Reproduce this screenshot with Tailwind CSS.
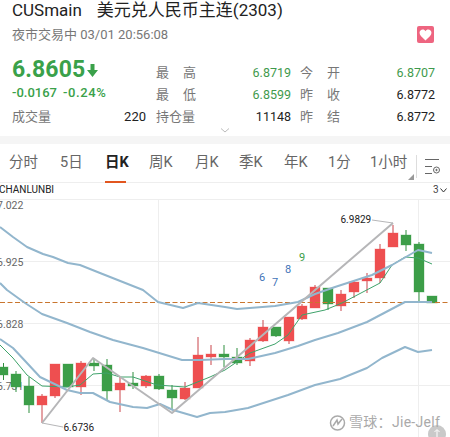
<!DOCTYPE html>
<html lang="zh">
<head>
<meta charset="utf-8">
<script src="https://cdn.jsdelivr.net/npm/@tailwindcss/browser@4"></script>
</head>
<body class="m-0 bg-white">
<div class="w-[450px] h-[437px] overflow-hidden bg-white font-['Roboto','Noto_Sans_CJK_SC',sans-serif] text-[#222]">
  <header class="h-[136px] px-3 relative">
    <div class="flex h-[20px] items-center text-[17px] leading-[20px] text-[#222]">
      <span>CUSmain</span>
      <span class="ml-[15px]">美元兑人民币主连(2303)</span>
    </div>
    <div class="flex items-center justify-between mt-[6px] h-[18px] pr-[4px]">
      <span class="text-[13px] text-[#777] leading-[18px]">夜市交易中 03/01 20:56:08</span>
      <span class="flex items-center justify-center w-[17px] h-[17px] rounded-[2px] bg-[#ee6580] mt-[-1px]">
        <svg width="13" height="12" viewBox="0 0 24 22"><path fill="#fff" d="M12 21 C5 15 1 11.500 1 7 C1 3.500 3.700 1 7 1 C9 1 11 2 12 4 C13 2 15 1 17 1 C20.300 1 23 3.500 23 7 C23 11.500 19 15 12 21 Z"/></svg>
      </span>
    </div>
    <div class="flex mt-[11px]">
      <div class="w-[134px] shrink-0">
        <div class="flex items-center h-[30px] text-[#3aa14a]">
          <span class="text-[23px] font-bold leading-[30px] tracking-[0.1px]">6.8605</span>
          <svg class="ml-[2px] mt-[1px]" width="11" height="13" viewBox="0 0 11 13"><path fill="#3aa14a" d="M3.500 0 H7.500 V6 H11 L5.500 13 L0 6 H3.500 Z"/></svg>
        </div>
        <div class="flex gap-[6px] text-[13px] font-medium text-[#3aa14a] h-[22px] leading-[22px] mt-[-3px]">
          <span>-0.0167</span><span class="tracking-[0.6px]">-0.24%</span>
        </div>
        <div class="flex justify-between text-[13px] leading-[22px] h-[22px] mt-[2px] text-[#777]">
          <span>成交量</span><span class="text-[#222]">220</span>
        </div>
      </div>
      <div class="ml-[10px] grid grid-cols-[40px_95px_49px_95px] auto-rows-[21.750px] text-[13px] leading-[21.750px] mt-[7px] text-[#777]">
        <span class="flex justify-between"><i class="not-italic">最</i><i class="not-italic">高</i></span>
        <span class="text-right text-[12.500px] text-[#3f9a4d]">6.8719</span>
        <span class="flex justify-between ml-[9px] w-[40px]"><i class="not-italic">今</i><i class="not-italic">开</i></span>
        <span class="text-right text-[12.500px] text-[#3f9a4d]">6.8707</span>
        <span class="flex justify-between"><i class="not-italic">最</i><i class="not-italic">低</i></span>
        <span class="text-right text-[12.500px] text-[#3f9a4d]">6.8599</span>
        <span class="flex justify-between ml-[9px] w-[40px]"><i class="not-italic">昨</i><i class="not-italic">收</i></span>
        <span class="text-right text-[12.500px] text-[#222]">6.8772</span>
        <span>持仓量</span>
        <span class="text-right text-[12.500px] text-[#222]">11148</span>
        <span class="flex justify-between ml-[9px] w-[40px]"><i class="not-italic">昨</i><i class="not-italic">结</i></span>
        <span class="text-right text-[12.500px] text-[#222]">6.8772</span>
      </div>
    </div>
    <svg class="absolute left-[220px] top-[128px]" width="10" height="5" viewBox="0 0 10 5"><path d="M1 0.500 L5 4 L9 0.500" fill="none" stroke="#bbb"/></svg>
  </header>
  <div class="h-[8px] bg-[#f5f5f5]"></div>
  <nav class="relative h-[39px] border-b border-[#eee] text-[14.500px] text-[#666]">
    <div class="flex h-[38px] items-center pl-[9px]">
      <span class="w-[51px]">分时</span>
      <span class="w-[45px]">5日</span>
      <span class="w-[44px] font-bold text-[#222]">日K</span>
      <span class="w-[46px]">周K</span>
      <span class="w-[44px]">月K</span>
      <span class="w-[45px]">季K</span>
      <span class="w-[44px]">年K</span>
      <span class="w-[42px]">1分</span>
      <span>1小时</span>
    </div>
    <span class="absolute left-[105px] top-[37px] w-[21px] h-[2px] bg-[#e2561f]"></span>
    <span class="absolute left-[408px] top-[30px] w-0 h-0 border-l-[6px] border-l-transparent border-b-[6px] border-b-[#999]"></span>
    <span class="absolute left-[416px] top-[11px] w-px h-[23px] bg-[#ddd]"></span>
    <svg class="absolute left-[424px] top-[14px]" width="17" height="18" viewBox="0 0 17 18" fill="none" stroke="#666" stroke-width="1"><path d="M1 1.500 H15 M1 8.500 H8 M1 15.500 H8"/><circle cx="12.500" cy="12" r="3"/><circle cx="12.500" cy="12" r="0.700" fill="#666"/></svg>
  </nav>
  <section class="relative h-[254px] overflow-hidden">
    <svg class="absolute inset-0" width="450" height="254" viewBox="0 183 450 254" fill="none">
      <g stroke="#eeeeee" stroke-width="1">
        <path d="M0 199.500 H450 M0 261.500 H450 M0 323.500 H450 M0 385.500 H450 M158.500 199 V437 M418.500 199 V437"/>
      </g>
      <g font-family="Roboto, sans-serif" font-size="10.500" fill="#666">
        <text x="-3" y="209">7.022</text>
        <text x="-3" y="266">6.925</text>
        <text x="-3" y="328">6.828</text>
        <text x="-3" y="390">6.731</text>
      </g>
      <g stroke="#2f8f3e" stroke-width="1"><path d="M3.500 363 V380 M16 371 V392 M29 377 V413 M68 364 V387 M94 358 V371 M107 359 V400 M133 372 V389 M159 374 V390 M172 385 V410 M224 345 V367 M237 348 V365 M276 327 V337 M328 288 V310 M406 230 V251 M419 242 V301"/></g>
      <g stroke="#c9444a" stroke-width="1"><path d="M42 394 V423 M55 364 V398 M81 361 V395 M120 377 V412 M146 375 V388 M185 382 V400 M198 337 V388 M211 345 V365 M250 338 V366 M263 320 V342 M289 317 V344 M302 304 V320 M315 285 V308 M341 290 V311 M354 280 V298 M367 273 V293 M380 244 V283 M393 225 V247"/></g>
      <g fill="#3c9e48" stroke="#3c9e48" stroke-opacity="0.350">
        <rect x="-2" y="367" width="10" height="8"/><rect x="11" y="374" width="10" height="13"/><rect x="24" y="386" width="10" height="19"/>
        <rect x="63" y="364" width="10" height="23"/><rect x="89" y="363" width="10" height="3"/><rect x="102" y="365" width="10" height="26"/>
        <rect x="128" y="383" width="10" height="3"/><rect x="154" y="376" width="10" height="13"/><rect x="167" y="390" width="10" height="8"/>
        <rect x="219" y="354" width="10" height="3"/><rect x="232" y="357" width="10" height="6"/><rect x="271" y="327" width="10" height="9"/>
        <rect x="323" y="288" width="10" height="16"/><rect x="401" y="235" width="10" height="10"/><rect x="414" y="244" width="10" height="48"/><rect x="427" y="296" width="10" height="7"/>
      </g>
      <g fill="#ee4f50" stroke="#ee4f50" stroke-opacity="0.350">
        <rect x="37" y="396" width="10" height="9"/><rect x="50" y="364" width="10" height="32"/><rect x="76" y="363" width="10" height="24"/>
        <rect x="115" y="383" width="10" height="7"/><rect x="141" y="376" width="10" height="10"/><rect x="180" y="388" width="10" height="11"/>
        <rect x="193" y="355" width="10" height="33"/><rect x="206" y="354" width="10" height="3"/><rect x="245" y="340" width="10" height="21"/>
        <rect x="258" y="327" width="10" height="14"/><rect x="284" y="317" width="10" height="24"/><rect x="297" y="306" width="10" height="13"/>
        <rect x="310" y="287" width="10" height="21"/><rect x="336" y="294" width="10" height="12"/><rect x="349" y="282" width="10" height="10"/>
        <rect x="362" y="278" width="10" height="3"/><rect x="375" y="249" width="10" height="29"/><rect x="388" y="233" width="10" height="14"/>
      </g>
      <path d="M0 302.500 H450" stroke="#c9762f" stroke-width="1" stroke-dasharray="5 2.500"/>
      <polyline stroke="#3fa36b" stroke-width="1" points="0,345 13,358 27,375 42,386 67,387 80,385 93,374 107,373 120,377 133,377 157,385 185,387 210,377 225,370 250,353 275,344 288,335 302,315 325,310 342,303 380,283 392,265 405,257 418,258 432,264"/>
      <g stroke="#92b6cd" stroke-width="2" stroke-linejoin="round">
        <polyline points="0,227 13,237 27,247 43,254 53,257 68,263 80,265 100,273 143,290 158,302 183,308 198,303 225,307 237,309 275,306 298,302 315,294 335,287 372,275 392,265 418,250 432,253"/>
        <polyline points="0,283 7,290 25,303 42,314 67,323 90,332 113,340 143,348 182,360 200,360 225,359 248,359 275,353 298,346 315,340 338,333 367,322 405,302 432,302"/>
        <polyline points="0,339 13,348 27,363 40,377 67,390 80,393 93,393 110,402 133,407 147,408 160,404 173,410 197,417 210,413 225,412 248,408 288,395 315,385 340,379 367,368 382,358 405,347 418,352 432,350"/>
      </g>
      <polyline stroke="#b6b6b8" stroke-width="2" stroke-linejoin="round" points="42,423 93,358 172,413 393,223"/>
      <path d="M42 423 L63 427 M393 223 L372 220" stroke="#b6b6b8" stroke-width="1"/>
      <g font-family="Roboto, sans-serif" font-size="10" fill="#222">
        <text x="63.500" y="431">6.6736</text>
        <text x="340.500" y="223">6.9829</text>
      </g>
      <g font-family="Roboto, sans-serif" font-size="11" text-anchor="middle">
        <text x="262" y="281" fill="#3f74b8">6</text>
        <text x="275" y="286" fill="#3f74b8">7</text>
        <text x="288" y="273" fill="#3f74b8">8</text>
        <text x="302" y="261" fill="#3c9e48">9</text>
      </g>
      <circle cx="337.500" cy="423" r="7" stroke="#aaa" stroke-width="1.500" fill="#fff" fill-opacity="0.500"/>
      <path d="M333 426 L337 420 L338 424 L342 419" stroke="#aaa" stroke-width="1.500"/>
      <circle cx="437" cy="434" r="9" fill="#c9c9c9"/>
      <path d="M437 438 V430 M434.500 432 L437 429.500 L439.500 432" stroke="#fff" stroke-width="1"/>
    </svg>
    <span class="absolute left-0 top-[1px] text-[10px] leading-[12px] text-[#222] ml-[-1px]">CHANLUNBI</span>
    <span class="absolute left-[433px] top-[1px] flex items-center gap-[1px] text-[10px] leading-[12px] text-[#444]">3<svg width="7" height="5" viewBox="0 0 7 5"><path d="M0.500 0.500 L3.500 4 L6.500 0.500" fill="none" stroke="#333"/></svg></span>
    <span class="absolute left-[349px] top-[231px] text-[14px] leading-[16px] text-[#aaa] tracking-[0.3px]">雪球：Jie-Jelf</span>
  </section>
</div>
</body>
</html>
